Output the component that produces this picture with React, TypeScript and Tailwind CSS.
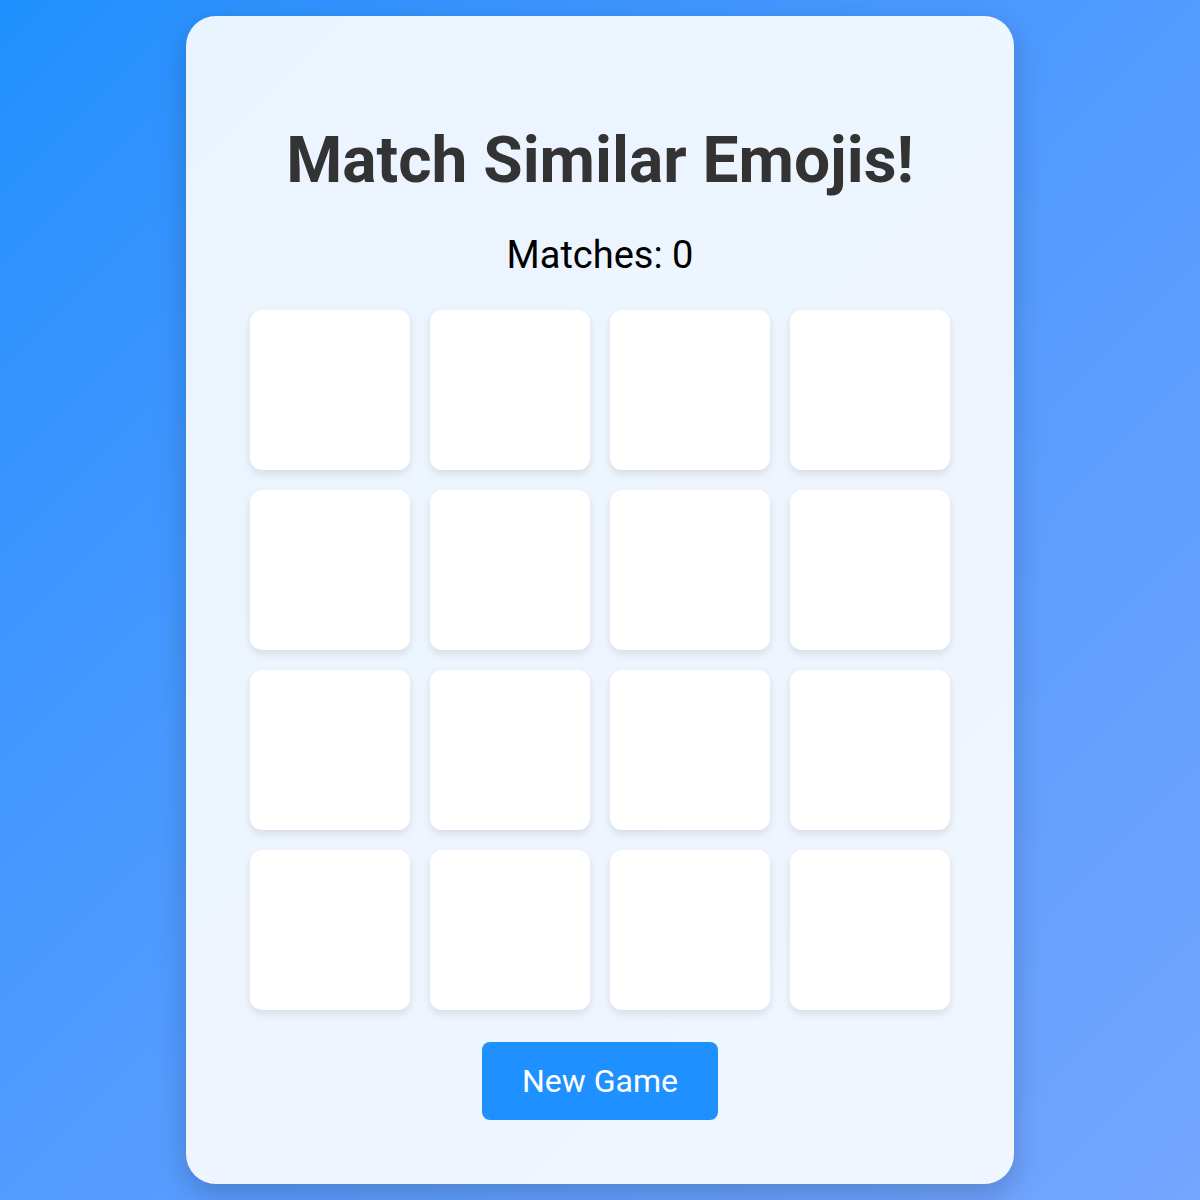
import { useState } from "react";

const EMOJIS = ["😀", "😃", "🐶", "🐱", "🍎", "🍏", "🚗", "🚕"];

function shuffle<T>(items: T[]): T[] {
  const a = [...items];
  for (let i = a.length - 1; i > 0; i--) {
    const j = Math.floor(Math.random() * (i + 1));
    [a[i], a[j]] = [a[j], a[i]];
  }
  return a;
}

function makeDeck() {
  return shuffle([...EMOJIS, ...EMOJIS]).map((emoji, id) => ({ id, emoji }));
}

export default function App() {
  const [deck, setDeck] = useState(makeDeck);
  const [flipped, setFlipped] = useState<number[]>([]);
  const [matched, setMatched] = useState<number[]>([]);

  const flip = (id: number) => {
    if (flipped.length === 2 || flipped.includes(id) || matched.includes(id)) return;
    const next = [...flipped, id];
    setFlipped(next);
    if (next.length === 2) {
      const [a, b] = next;
      if (deck[a].emoji === deck[b].emoji) {
        setMatched((m) => [...m, a, b]);
        setFlipped([]);
      } else {
        setTimeout(() => setFlipped([]), 800);
      }
    }
  };

  const newGame = () => {
    setDeck(makeDeck());
    setFlipped([]);
    setMatched([]);
  };

  return (
    <div className="min-h-[1200px] w-full bg-gradient-to-br from-[#1e90ff] to-[#74a5ff] flex justify-center py-4 font-['Roboto',sans-serif]">
      <div className="w-[828px] rounded-[30px] bg-white/90 shadow-[0_10px_30px_rgba(0,0,0,0.2)] p-16 flex flex-col items-center">
        <h1 className="mt-[43px] text-[64px] leading-[75px] font-bold text-[#333]">
          Match Similar Emojis!
        </h1>
        <p className="mt-[35px] text-[38px] leading-[44px] text-black">
          Matches: {matched.length / 2}
        </p>
        <div className="mt-[33px] grid grid-cols-4 gap-5">
          {deck.map((card) => {
            const open = flipped.includes(card.id) || matched.includes(card.id);
            return (
              <button
                key={card.id}
                onClick={() => flip(card.id)}
                className="w-40 h-40 rounded-xl bg-white shadow-[0_4px_8px_rgba(0,0,0,0.1)] flex items-center justify-center text-[64px]"
              >
                {open ? card.emoji : ""}
              </button>
            );
          })}
        </div>
        <button
          onClick={newGame}
          className="mt-8 w-[236px] h-[78px] rounded-lg bg-[#1e90ff] text-white text-[32px]"
        >
          New Game
        </button>
      </div>
    </div>
  );
}
